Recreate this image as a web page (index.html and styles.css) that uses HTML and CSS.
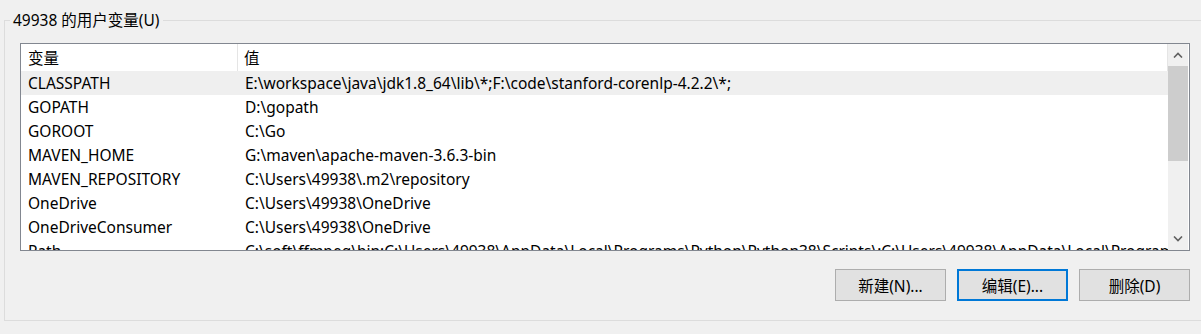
FILE: index.html
```html
<!DOCTYPE html>
<html lang="zh-CN">
<head>
    <meta charset="UTF-8">
    <meta name="viewport" content="width=device-width, initial-scale=1.0">
    <title>用户变量</title>
    <link rel="stylesheet" href="styles.css">
</head>
<body>
    <div class="group">
        <div class="group-title">49938 的用户变量(U)</div>
        <div class="group-body">
            <div class="listview">
                <div class="list-main">
                    <div class="list-header">
                        <div class="col-name">变量</div>
                        <div class="col-value">值</div>
                    </div>
                    <div class="list-row selected">
                        <div class="col-name">CLASSPATH</div>
                        <div class="col-value">E:\workspace\java\jdk1.8_64\lib\*;F:\code\stanford-corenlp-4.2.2\*;</div>
                    </div>
                    <div class="list-row">
                        <div class="col-name">GOPATH</div>
                        <div class="col-value">D:\gopath</div>
                    </div>
                    <div class="list-row">
                        <div class="col-name">GOROOT</div>
                        <div class="col-value">C:\Go</div>
                    </div>
                    <div class="list-row">
                        <div class="col-name">MAVEN_HOME</div>
                        <div class="col-value">G:\maven\apache-maven-3.6.3-bin</div>
                    </div>
                    <div class="list-row">
                        <div class="col-name">MAVEN_REPOSITORY</div>
                        <div class="col-value">C:\Users\49938\.m2\repository</div>
                    </div>
                    <div class="list-row">
                        <div class="col-name">OneDrive</div>
                        <div class="col-value">C:\Users\49938\OneDrive</div>
                    </div>
                    <div class="list-row">
                        <div class="col-name">OneDriveConsumer</div>
                        <div class="col-value">C:\Users\49938\OneDrive</div>
                    </div>
                    <div class="list-row">
                        <div class="col-name">Path</div>
                        <div class="col-value">C:\soft\ffmpeg\bin;C:\Users\49938\AppData\Local\Programs\Python\Python38\Scripts\;C:\Users\49938\AppData\Local\Programs\Python\Python38\;</div>
                    </div>
                </div>
                <div class="scrollbar">
                    <div class="scroll-btn">
                        <svg width="10" height="6" viewBox="0 0 10 6"><path d="M1 5.5 L5 1.5 L9 5.5" fill="none" stroke="#606060" stroke-width="1.6"/></svg>
                    </div>
                    <div class="scroll-thumb"></div>
                    <div class="scroll-track"></div>
                    <div class="scroll-btn">
                        <svg width="10" height="6" viewBox="0 0 10 6"><path d="M1 0.5 L5 4.5 L9 0.5" fill="none" stroke="#606060" stroke-width="1.6"/></svg>
                    </div>
                </div>
            </div>
            <div class="buttons">
                <button class="btn">新建(N)...</button>
                <button class="btn default">编辑(E)...</button>
                <button class="btn">删除(D)</button>
            </div>
        </div>
    </div>
</body>
</html>
```

FILE: styles.css
```css
body {
    margin: 0;
    height: 334px;
    overflow: hidden;
    background-color: #f0f0f0;
    font-family: 'Noto Sans', 'Noto Sans CJK SC', sans-serif;
    font-size: 15.5px;
    color: #000;
}
.group {
    margin: 20px 0 0 4px;
    height: 299px;
    border: 1px solid #dcdcdc;
    border-right: none;
}
.group-title {
    width: fit-content;
    margin: -11px 0 0 5px;
    padding: 0 3px;
    height: 20px;
    line-height: 20px;
    background-color: #f0f0f0;
}
.group-body {
    width: 1170px;
    margin: 13px 0 0 15px;
}
.listview {
    display: flex;
    height: 206px;
    border: 1px solid #828790;
    background-color: #fff;
    overflow: hidden;
}
.list-main {
    flex: 1;
    overflow: hidden;
}
.list-header {
    display: flex;
    height: 27px;
    line-height: 29px;
    border-right: 1px solid #e5e5e5;
}
.list-header .col-name {
    width: 209px;
    border-right: 1px solid #e5e5e5;
}
.col-name {
    width: 210px;
    padding-left: 7px;
    flex-shrink: 0;
}
.col-value {
    padding-left: 6px;
    white-space: nowrap;
}
.list-row {
    display: flex;
    height: 24px;
    line-height: 24px;
}
.list-row .col-name {
    width: 211px;
}
.selected {
    background-color: #efefef;
}
.scrollbar {
    width: 20px;
    margin-right: 1px;
    display: flex;
    flex-direction: column;
    background-color: #f0f0f0;
}
.scroll-btn {
    height: 22px;
    display: flex;
    align-items: center;
    justify-content: center;
}
.scroll-thumb {
    height: 95px;
    background-color: #cdcdcd;
}
.scroll-track {
    flex: 1;
}
.buttons {
    display: flex;
    justify-content: flex-end;
    gap: 11px;
    margin-top: 18px;
}
.btn {
    width: 111px;
    height: 32px;
    padding: 0;
    border: 1px solid #adadad;
    background-color: #e1e1e1;
    font-family: inherit;
    font-size: 15.5px;
    color: #000;
}
.btn.default {
    border: 2px solid #0078d7;
}
```
